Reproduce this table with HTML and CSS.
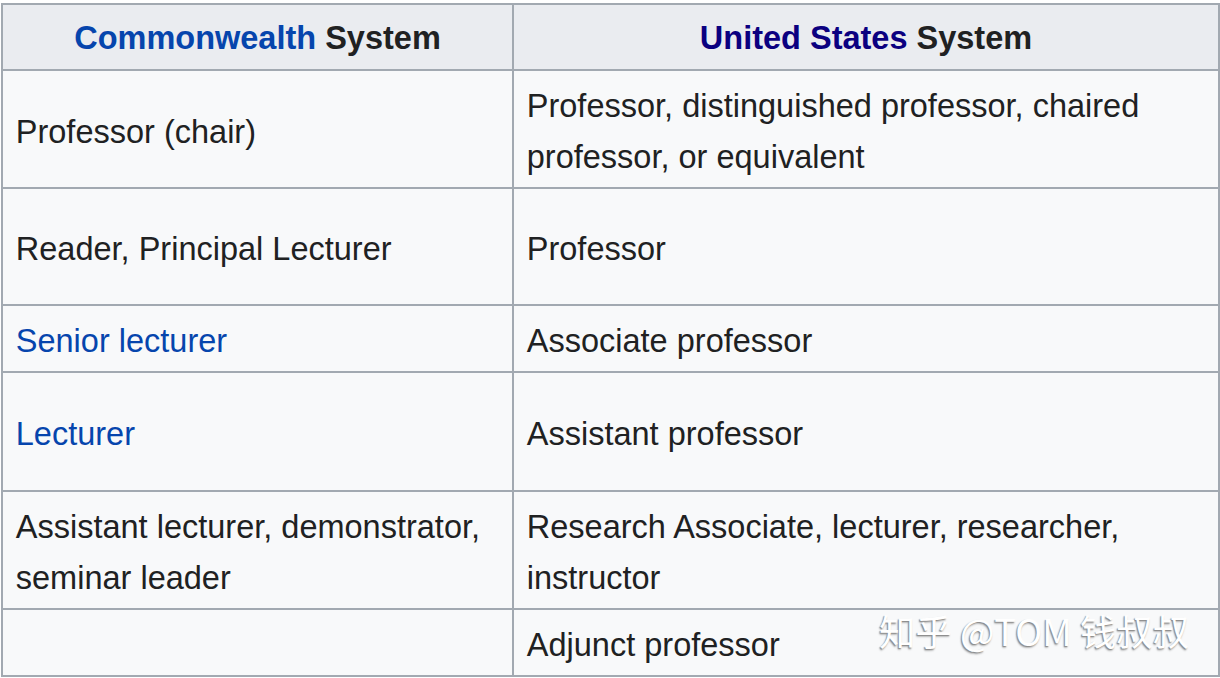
FILE: index.html
```html
<!DOCTYPE html>
<html lang="en">
<head>
<meta charset="utf-8">
<title>Academic ranks</title>
<link rel="stylesheet" href="styles.css">
</head>
<body>
<div class="page">
  <table class="wikitable">
    <colgroup>
      <col class="col-a">
      <col class="col-b">
    </colgroup>
    <thead>
      <tr class="row-head">
        <th><a class="link" href="#">Commonwealth</a> System</th>
        <th><a class="link visited" href="#">United States</a> System</th>
      </tr>
    </thead>
    <tbody>
      <tr class="row-118">
        <td>Professor (chair)</td>
        <td>Professor, distinguished professor, chaired professor, or equivalent</td>
      </tr>
      <tr class="row-117">
        <td>Reader, Principal Lecturer</td>
        <td>Professor</td>
      </tr>
      <tr class="row-67">
        <td><a class="link" href="#">Senior lecturer</a></td>
        <td>Associate professor</td>
      </tr>
      <tr class="row-119">
        <td><a class="link" href="#">Lecturer</a></td>
        <td>Assistant professor</td>
      </tr>
      <tr class="row-118">
        <td>Assistant lecturer, demonstrator, seminar leader</td>
        <td>Research Associate, lecturer, researcher, instructor</td>
      </tr>
      <tr class="row-66">
        <td></td>
        <td>Adjunct professor</td>
      </tr>
    </tbody>
  </table>
  <div class="watermark">知乎 @TOM 钱叔叔</div>
</div>
</body>
</html>
```

FILE: styles.css
```css
html, body {
  margin: 0;
  padding: 0;
  background: #ffffff;
}

.page {
  position: relative;
  padding: 3px 0 0 1px;
  width: 1219px;
}

.wikitable {
  border-collapse: collapse;
  width: 1217px;
  table-layout: fixed;
  background: #f8f9fa;
  color: #202122;
  font-family: "Liberation Sans", Arial, Helvetica, sans-serif;
  font-size: 32.5px;
  line-height: 51.5px;
  border: 2px solid #a2a9b1;
}

.col-a {
  width: 511px;
}

.col-b {
  width: 706px;
}

.wikitable th,
.wikitable td {
  border: 2px solid #a2a9b1;
  padding: 9.4px 12.8px 3.4px;
  vertical-align: middle;
}

.wikitable th {
  background: #eaecf0;
  font-weight: bold;
  text-align: center;
  padding-top: 8.4px;
  padding-bottom: 4.4px;
}

.wikitable td {
  text-align: left;
}

.row-head { height: 66px; }
.row-66 { height: 66px; }
.row-67 { height: 67px; }
.row-117 { height: 117px; }
.row-118 { height: 118px; }
.row-119 { height: 119px; }

.link {
  color: #0645ad;
  text-decoration: none;
}

.link.visited {
  color: #0b0080;
}

.watermark {
  position: absolute;
  left: 879px;
  top: 607px;
  font-family: "Noto Sans CJK SC", "Noto Sans", sans-serif;
  font-size: 36.4px;
  line-height: 46px;
  color: #ffffff;
  text-shadow: -1px 1px 1px #8a8a8a, -1px 2px 2px rgba(0, 0, 0, 0.25);
  white-space: nowrap;
}
```
